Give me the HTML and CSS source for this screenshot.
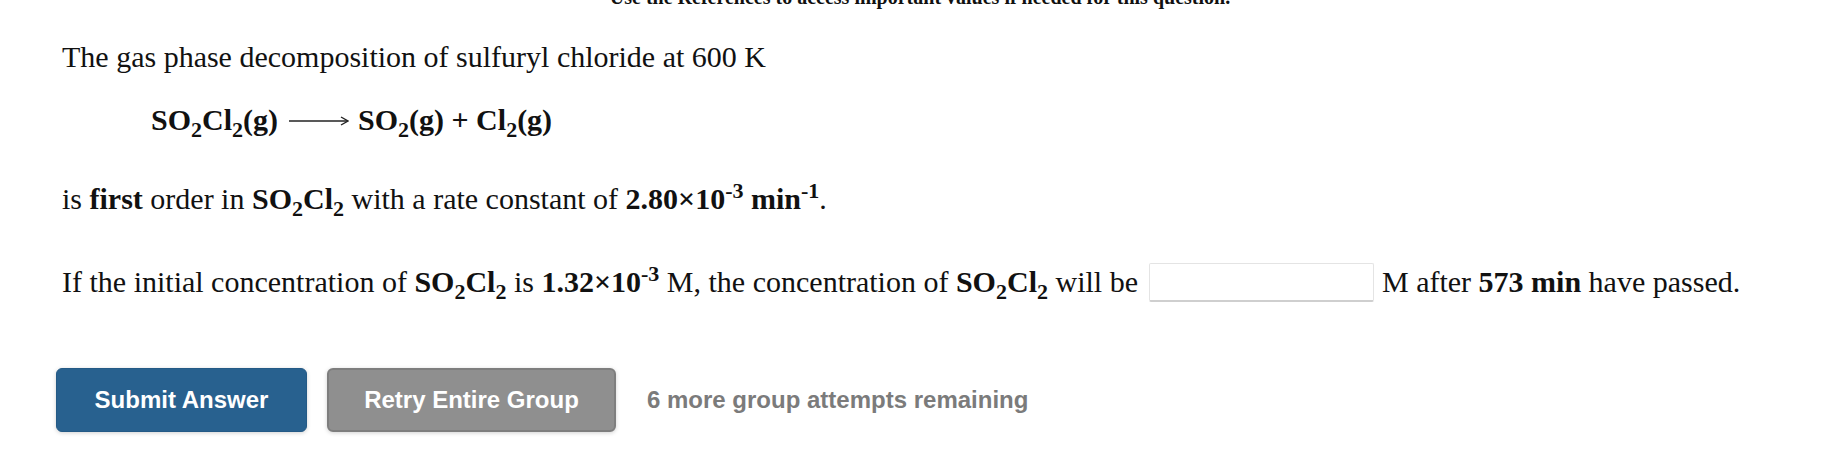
FILE: index.html
```html
<!DOCTYPE html>
<html>
<head>
<meta charset="utf-8">
<link rel="stylesheet" href="styles.css">
</head>
<body>
<div class="page">
  <div class="refs">Use the References to access important values if needed for this question.</div>
  <div class="question">
    <p class="line first-line">The gas phase decomposition of sulfuryl chloride at 600 K</p>
    <p class="line equation"><b>SO<sub>2</sub>Cl<sub>2</sub>(g)</b> <svg class="arrow" width="60" height="12" viewBox="0 0 60 12"><line x1="0" y1="6" x2="58" y2="6" stroke="#222" stroke-width="1.6"/><path d="M52 2 L59 6 L52 10" fill="none" stroke="#222" stroke-width="1.4"/></svg> <b>SO<sub>2</sub>(g) + Cl<sub>2</sub>(g)</b></p>
    <p class="line rate">is <b>first</b> order in <b>SO<sub>2</sub>Cl<sub>2</sub></b> with a rate constant of <b>2.80×10<sup>-3</sup> min<sup>-1</sup></b>.</p>
    <p class="line conc">If the initial concentration of <b>SO<sub>2</sub>Cl<sub>2</sub></b> is <b>1.32×10<sup>-3</sup></b> M, the concentration of <b>SO<sub>2</sub>Cl<sub>2</sub></b> will be <input class="answer" type="text"> M after <b>573 min</b> have passed.</p>
  </div>
  <div class="actions">
    <button class="btn btn-submit">Submit Answer</button>
    <button class="btn btn-retry">Retry Entire Group</button>
    <span class="attempts">6 more group attempts remaining</span>
  </div>
</div>
</body>
</html>
```

FILE: styles.css
```css
html, body {
  margin: 0;
  padding: 0;
  background: #ffffff;
}

.page {
  width: 1840px;
  height: 460px;
  overflow: hidden;
  font-family: "Liberation Serif", "Times New Roman", serif;
  color: #111;
}

.refs {
  text-align: center;
  font-weight: bold;
  font-size: 20px;
  line-height: 20px;
  margin-top: -13px;
  height: 20px;
  color: #111;
}

.question {
  padding: 32px 0 0 62px;
}

.line {
  margin: 0;
  font-size: 30px;
  line-height: 36px;
  white-space: nowrap;
}

.line b {
  font-weight: bold;
}

sub, sup {
  font-size: 22px;
  line-height: 0;
  position: relative;
  vertical-align: baseline;
}

sub {
  top: 7px;
}

sup {
  top: -11px;
}

.equation {
  margin-top: 27px;
  padding-left: 89px;
}

.arrow {
  vertical-align: 3px;
  margin: 0 2px 0 3px;
}

.rate {
  margin-top: 43px;
}

.conc {
  margin-top: 47px;
}

.answer {
  display: inline-block;
  vertical-align: top;
  box-sizing: border-box;
  width: 225px;
  height: 39px;
  margin: -1px 0 0 4px;
  border: 1px solid #e4e4e4;
  border-bottom: 2px solid #cfcfcf;
  border-radius: 2px;
  background: #fff;
  padding: 0 6px;
  font-size: 20px;
}

.actions {
  display: flex;
  align-items: center;
  gap: 20px;
  margin-top: 66px;
  padding-left: 56px;
}

.btn {
  box-sizing: border-box;
  height: 64px;
  border-radius: 6px;
  font-family: "Liberation Sans", Arial, sans-serif;
  font-weight: bold;
  font-size: 24px;
  color: #fff;
  padding: 0;
  box-shadow: 0 1px 4px rgba(0, 0, 0, 0.18);
}

.btn-submit {
  width: 251px;
  background: #28618f;
  border: 1px solid #245a86;
}

.btn-retry {
  width: 289px;
  background: #8f8f8f;
  border: 2px solid #7e7e7e;
}

.attempts {
  margin-left: 11px;
  font-family: "Liberation Sans", Arial, sans-serif;
  font-weight: bold;
  font-size: 24px;
  color: #7b7b7b;
}
```
